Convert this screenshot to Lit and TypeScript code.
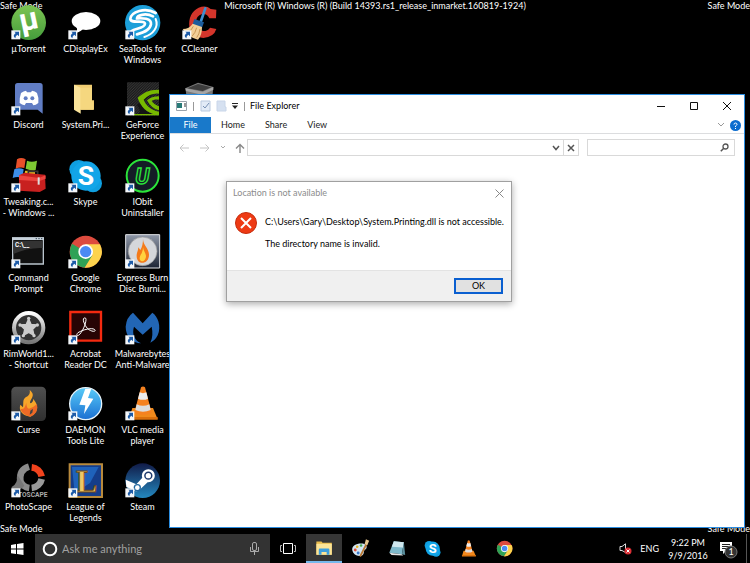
import { LitElement, html, css, svg, TemplateResult, SVGTemplateResult } from "lit";
import { customElement, property } from "lit/decorators.js";

type Art = SVGTemplateResult;

const skype: Art = svg`
  <circle cx="32" cy="34" r="28" fill="#0f9fe0"/><circle cx="75" cy="76" r="27" fill="#0f9fe0"/>
  <circle cx="54" cy="54" r="44" fill="#12a5e8"/>
  <text x="54" y="82" text-anchor="middle" font-size="80" font-weight="bold" fill="#fff">S</text>`;

const chrome: Art = svg`
  <circle cx="53" cy="53" r="48" fill="#dd4b3e"/>
  <path d="M53 53 L12 29 A48 48 0 0 0 50 101 L74 65Z" fill="#2fa256"/>
  <path d="M53 31 H96 A48 48 0 0 1 50 101 L73 64Z" fill="#fdd34d"/>
  <circle cx="53" cy="53" r="22" fill="#fff"/><circle cx="53" cy="53" r="17" fill="#4a8af4"/>`;

const vlc: Art = svg`
  <path d="M22 66 H84 L98 100 H12Z" fill="#f08a1c"/><path d="M12 93 H98 V101 H12Z" fill="#d96f0c"/>
  <path d="M48 4 Q54 -1 60 4 L80 80 Q54 94 28 80Z" fill="#f58220"/>
  <path d="M44 19 Q54 24 64 19 L69 38 Q54 45 39 38Z" fill="#eee"/>
  <path d="M35 55 Q54 64 73 55 L77 72 Q54 83 31 72Z" fill="#ddd"/>`;

const art: Record<string, Art> = {
  utorrent: svg`<defs><linearGradient id="g" x2="0" y2="1"><stop stop-color="#7cc452"/><stop offset="1" stop-color="#459c3c"/></linearGradient></defs>
    <circle cx="53" cy="53" r="52" fill="url(#g)"/>
    <text x="55" y="74" text-anchor="middle" font-size="94" font-weight="bold" fill="#fff" transform="rotate(-12 54 53)">µ</text>`,
  comic: svg`<ellipse cx="54" cy="48" rx="43" ry="27" fill="#fff"/><path d="M22 60 Q32 74 24 84 Q42 78 48 68Z" fill="#fff"/>`,
  seatools: svg`<circle cx="53" cy="53" r="53" fill="#1c9fd9"/>
    <g fill="none" stroke="#fff" stroke-linecap="round">
    <path d="M92 24 C60 6 18 20 16 42 C18 58 58 42 60 56 C60 70 30 70 20 78" stroke-width="8"/>
    <path d="M84 34 C60 22 36 32 36 40 C44 40 80 36 78 58 C74 78 52 84 36 88" stroke-width="8"/>
    <path d="M92 42 C102 66 84 88 58 96" stroke-width="6"/></g>`,
  ccleaner: svg`<path d="M103 14 L102 40 H82 Q76 25 60 27 Q42 32 42 52 Q44 76 64 78 Q78 78 84 68 L103 72 Q96 96 64 99 Q30 98 22 66 Q18 24 50 8 Q72 0 86 12Z" fill="#d4352b"/>
    <path d="M70 10 L57 48" stroke="#3f8fd0" stroke-width="8" stroke-linecap="round"/>
    <path d="M37 42 L66 52 L60 68 L32 58Z" fill="#1c5c9c"/>
    <path d="M32 56 L60 66 Q60 92 48 104 Q20 98 2 72 Q22 72 32 56Z" fill="#f2cf97"/>
    <path d="M34 64 Q28 78 16 82 M44 68 Q40 84 30 94 M54 72 Q52 88 44 98" stroke="#c99654" stroke-width="3" fill="none"/>`,
  discord: svg`<path d="M20 6 H87 Q95 6 95 14 V98 L80 86 H20 Q12 86 12 78 V14 Q12 6 20 6Z" fill="#617dc4"/>
    <path d="M30 36 Q38 30 45 29 L48 34 H60 L63 29 Q72 30 78 36 Q84 50 82 66 Q74 73 67 73 L63 66 H45 L41 73 Q33 72 26 66 Q25 50 30 36Z" fill="#fff"/>
    <circle cx="44" cy="52" r="6" fill="#617dc4"/><circle cx="64" cy="52" r="6" fill="#617dc4"/>`,
  folder: svg`<path d="M18 11 H72 V58 H78 V86 H34Z" fill="#f0cd72"/><path d="M18 11 L38 20 V98 L18 86Z" fill="#fbe49b"/>
    <path d="M38 20 H72 V60 L76 66 V86 H38Z" fill="#f5d77f"/>`,
  geforce: svg`<defs><pattern id="c" width="8" height="8" patternUnits="userSpaceOnUse"><path d="M0 8L8 0" stroke="#4a4a4a" stroke-width="2"/></pattern></defs>
    <path d="M6 4H102V104H6Z" fill="#1b1b1b"/><path d="M6 4H102V104H6Z" fill="url(#c)"/>
    <path d="M102 26 C74 25 56 36 40 54 C48 80 66 96 92 102 H30 C46 98 50 90 36 72 Z" fill="#141414"/>
    <path d="M102 26 C74 25 56 34 38 50 C46 76 66 96 94 101 L102 101 V92 C78 88 62 72 56 56 C70 42 84 36 102 38Z" fill="#77b900"/>
    <path d="M102 46 C86 46 76 50 66 58 C74 74 86 84 102 88 V76 C92 72 84 66 80 60 C86 56 94 55 102 56Z" fill="#77b900"/>
    <path d="M24 101 H102" stroke="#77b900" stroke-width="4"/>`,
  bin: svg`<path d="M10 22 L48 5 L94 18 L86 100 H22Z" fill="#777"/><path d="M16 22 L48 9 L88 19 L62 30Z" fill="#3d3d3d"/>
    <path d="M10 22 L62 32 L94 18 V26 L62 42 L12 30Z" fill="#a5a5a5"/>`,
  tweaking: svg`<path d="M18 4 Q30 -4 44 4 L40 30 Q28 26 14 32Z" fill="#e8502a"/><path d="M48 8 Q62 14 78 8 L74 36 Q60 38 44 32Z" fill="#7dc832"/>
    <path d="M10 34 Q24 28 38 34 L34 60 Q20 54 5 60Z" fill="#3d8ee8"/><path d="M42 38 H72 V56 H40Z" fill="#e5b822"/>
    <path d="M52 48 V40 H80 V48" fill="none" stroke="#333" stroke-width="5"/>
    <path d="M24 52 L40 44 L102 50 L104 92 L86 102 L24 98Z" fill="#c8201f"/><path d="M24 52 L84 60 L104 52 V62 L84 70 L24 66Z" fill="#ec4540"/>
    <path d="M80 58 h6 v22 h-6z" fill="#ddd"/>`,
  skype,
  iobit: svg`<circle cx="53" cy="53" r="48" fill="#141c26" stroke="#2be53a" stroke-width="6"/>
    <text x="52" y="77" text-anchor="middle" font-size="66" font-style="italic" font-weight="bold" fill="#141c26" stroke="#2be53a" stroke-width="4">U</text>`,
  cmd: svg`<path d="M5 12 H97 V90 H5Z" fill="#111" stroke="#b9c3cc" stroke-width="4"/><path d="M7 20 H95 V42 Q50 40 7 60Z" fill="#333"/>
    <path d="M3 10 H99 V18 H3Z" fill="#c6d1da"/><path d="M74 14h4M82 14h4M90 14h4" stroke="#345" stroke-width="3"/>
    <text x="12" y="39" font-size="19" font-weight="bold" fill="#fff">C:\\__</text>`,
  chrome,
  burn: svg`<defs><linearGradient id="b" x2="0" y2="1"><stop stop-color="#8f98a8"/><stop offset="1" stop-color="#1d2434"/></linearGradient></defs>
    <path d="M2 2H104V102H2Z" fill="url(#b)" stroke="#e4e6ea" stroke-width="3"/><circle cx="53" cy="52" r="43" fill="#d5d7db" stroke="#999" stroke-width="2"/>
    <path d="M54 14 C54 34 72 42 72 62 C72 78 62 86 52 86 C40 86 34 76 35 62 C36 54 40 48 40 40 L46 48 C52 38 54 26 54 14Z" fill="#f47a1a"/>
    <path d="M54 40 C56 54 66 60 62 72 Q58 83 50 82 C40 78 44 66 50 58 Q54 50 54 40Z" fill="#ffd23e"/>`,
  rimworld: svg`<defs><linearGradient id="r" x2="0" y2="1"><stop stop-color="#fff"/><stop offset="1" stop-color="#777"/></linearGradient></defs>
    <circle cx="53" cy="53" r="44" fill="#333" stroke="url(#r)" stroke-width="12"/>
    <path d="M53 26 L60 43 L78 45 L65 58 L69 76 L53 67 L37 76 L41 58 L28 45 L46 43Z" fill="#ccc" stroke="#ccc" stroke-width="4" stroke-linejoin="round"/>
    <g fill="#ccc"><circle cx="53" cy="25" r="5"/><circle cx="79" cy="45" r="5"/><circle cx="27" cy="45" r="5"/><circle cx="69" cy="77" r="5"/><circle cx="37" cy="77" r="5"/></g>`,
  acrobat: svg`<path d="M7 6H99V92H7Z" fill="#270404" stroke="#f42a10" stroke-width="7"/>
    <path d="M51 24 C45 22 44 32 50 42 C56 56 64 62 76 64 C86 64 82 56 70 56 C56 56 40 62 30 68 C22 76 30 80 36 72 C44 62 54 42 54 28 Q54 24 51 24Z" fill="none" stroke="#fff" stroke-width="3"/>`,
  malware: svg`<path d="M24 8 L53 40 L82 8 C98 18 110 48 98 76 Q90 92 76 98 Q86 78 80 50 L53 74 L27 50 C20 72 28 90 48 100 C22 98 2 80 2 50 Q4 22 24 8Z" fill="#2266b5"/>`,
  curse: svg`<defs><linearGradient id="cu" x2="0" y2="1"><stop stop-color="#505050"/><stop offset="1" stop-color="#303030"/></linearGradient></defs>
    <rect x="1" y="2" width="104" height="103" rx="14" fill="url(#cu)"/>
    <path d="M56 12 C78 30 54 40 58 52 C64 50 68 44 66 38 C82 56 86 76 58 92 C34 88 22 74 28 56 L36 64 C38 50 34 42 44 34 Q60 28 56 12Z" fill="#f7a62a"/>
    <path d="M46 50 Q46 66 54 68 Q68 64 78 54 Q84 82 58 92 Q34 86 28 68 Q40 74 46 50Z" fill="#ee6a26"/>
    <path d="M58 74 l8 -6 l-2 12 l-8 6z" fill="#444"/>`,
  daemon: svg`<defs><linearGradient id="d" x2="0" y2="1"><stop stop-color="#58cbf8"/><stop offset="1" stop-color="#1a6fd2"/></linearGradient></defs>
    <circle cx="53" cy="53" r="48" fill="url(#d)" stroke="#e8f4fb" stroke-width="4"/>
    <path d="M52 8 L70 8 L60 36 L76 38 L48 84 L52 58 L34 56Z" fill="#fff"/>`,
  vlc,
  photoscape: svg`<g fill="none" stroke-width="20"><path d="M62 13 A34 34 0 0 1 92 40" stroke="#f1431d"/>
    <path d="M92 48 A34 34 0 0 1 62 75" stroke="#999"/><path d="M55 75 A34 34 0 0 1 28 54 Q24 20 54 11" stroke="#8b8b8b"/></g>
    <path d="M18 34 Q22 62 2 72 V82 Q28 84 40 68Z" fill="#777"/>
    <text x="21" y="102" font-size="20" font-weight="bold" fill="#aaa">TOSCAPE</text>`,
  league: svg`<path d="M5 4H102V102H5Z" fill="#153d8a" stroke="#b88a3c" stroke-width="6"/><path d="M12 12 L92 12 L66 60 L20 90Z" fill="#1f62ba"/>
    <text x="56" y="86" text-anchor="middle" font-size="96" class="serif" font-weight="bold" fill="#efc765" stroke="#6d4717" stroke-width="3">L</text>`,
  steam: svg`<defs><linearGradient id="s" x2="0" y2="1"><stop stop-color="#111b48"/><stop offset="1" stop-color="#2488bf"/></linearGradient></defs>
    <circle cx="53" cy="53" r="52" fill="url(#s)"/><path d="M2 50 L34 64 L52 44 L72 54 L44 80 Q34 90 24 80 L4 72Z" fill="#fff"/>
    <circle cx="70" cy="38" r="16" fill="#1d3a6d" stroke="#fff" stroke-width="7"/><circle cx="70" cy="38" r="8" fill="#fff"/>
    <circle cx="37" cy="74" r="9" fill="none" stroke="#2469a0" stroke-width="4"/>`,
  explorer: svg`<path d="M8 14 H38 L44 22 H98 V92 H8Z" fill="#e9bc4c"/><path d="M8 28 H98 V92 H8Z" fill="#fce497"/>
    <path d="M22 92 V62 Q22 56 28 56 H78 Q84 56 84 62 V92 H68 V76 H38 V92Z" fill="#3f9fdc"/>`,
  paint: svg`<path d="M2 64 C-6 30 44 14 76 24 C98 36 92 52 80 60 C68 68 80 84 62 96 C36 106 8 92 2 64Z" fill="#d3e6f4"/>
    <circle cx="20" cy="62" r="9" fill="#e0503c"/><circle cx="32" cy="42" r="8" fill="#e6b324"/><circle cx="56" cy="34" r="8" fill="#48a850"/><circle cx="38" cy="80" r="9" fill="#3a78c9"/>
    <path d="M50 102 L92 20" stroke="#b97834" stroke-width="11"/><path d="M78 24 L86 -4 L106 4 L94 32Z" fill="#e7c890"/>`,
  notes: svg`<path d="M36 8 L98 14 L86 88 L8 78Z" fill="#7fb9cb"/><path d="M36 8 L98 14 L93 46 L24 42Z" fill="#cfe7ee"/>
    <path d="M8 78 L86 88 L94 96 L22 92Z" fill="#e4e4e4"/><path d="M98 14 L106 92 L86 88Z" fill="#5c8f9d"/>`,
};

@customElement("art-icon")
class ArtIcon extends LitElement {
  static styles = css`
    :host { display: block; position: relative; width: 35px; height: 35px; }
    svg { display: block; width: 100%; height: 100%; overflow: visible; font-family: Roboto, sans-serif; }
    .serif { font-family: "Liberation Serif", serif; }
    .link { position: absolute; left: 0; bottom: 0; width: 10px; height: 10px; }
  `;
  @property() name = "";
  @property({ type: Boolean }) shortcut = false;
  render() {
    return html`<svg viewBox="0 0 105 105" aria-hidden="true">${art[this.name]}</svg>
      ${this.shortcut
        ? html`<svg class="link" viewBox="0 0 30 30" aria-hidden="true"><path d="M1 1H28V28H1Z" fill="#f4f7fa"/>
            <path d="M10 5 H24 V19 L19 14 Q13 18 13 25 Q3 18 14 9Z" fill="#1d5ba8"/></svg>`
        : ""}`;
  }
}

interface Shortcut { icon: string; lines: string[]; plain?: boolean }

const columns: Shortcut[][] = [
  [
    { icon: "utorrent", lines: ["µTorrent"] },
    { icon: "discord", lines: ["Discord"] },
    { icon: "tweaking", lines: ["Tweaking.c...", "- Windows ..."] },
    { icon: "cmd", lines: ["Command", "Prompt"] },
    { icon: "rimworld", lines: ["RimWorld1...", "- Shortcut"] },
    { icon: "curse", lines: ["Curse"] },
    { icon: "photoscape", lines: ["PhotoScape"] },
  ],
  [
    { icon: "comic", lines: ["CDisplayEx"] },
    { icon: "folder", lines: ["System.Pri..."], plain: true },
    { icon: "skype", lines: ["Skype"] },
    { icon: "chrome", lines: ["Google", "Chrome"] },
    { icon: "acrobat", lines: ["Acrobat", "Reader DC"] },
    { icon: "daemon", lines: ["DAEMON", "Tools Lite"] },
    { icon: "league", lines: ["League of", "Legends"] },
  ],
  [
    { icon: "seatools", lines: ["SeaTools for", "Windows"] },
    { icon: "geforce", lines: ["GeForce", "Experience"] },
    { icon: "iobit", lines: ["IObit", "Uninstaller"] },
    { icon: "burn", lines: ["Express Burn", "Disc Burni..."] },
    { icon: "malware", lines: ["Malwarebytes", "Anti-Malware"] },
    { icon: "vlc", lines: ["VLC media", "player"] },
    { icon: "steam", lines: ["Steam"] },
  ],
  [
    { icon: "ccleaner", lines: ["CCleaner"] },
    { icon: "bin", lines: [], plain: true },
  ],
];

const glyph = (w: number, h: number, body: SVGTemplateResult): TemplateResult =>
  html`<svg class="glyph" width=${w} height=${h} viewBox="0 0 ${w} ${h}" aria-hidden="true">${body}</svg>`;

@customElement("explorer-window")
class ExplorerWindow extends LitElement {
  static styles = css`
    :host { display: flex; flex-direction: column; box-sizing: border-box; background: #fff; border: 1px solid #2b8de0; color: #222; font: 9px/12px Lato, sans-serif; }
    * { box-sizing: border-box; }
    button { font: inherit; color: inherit; border: 0; padding: 0; background: none; display: flex; align-items: center; justify-content: center; }
    .glyph { display: block; flex: none; }
    .title { display: flex; align-items: center; height: 22px; padding: 0 1px 0 6px; }
    .quick { display: flex; align-items: center; gap: 5px; }
    .quick i { width: 1px; height: 9px; margin: 0 1px; background: #999; }
    .name { margin-left: 4px; flex: 1; color: #000; }
    .control { width: 33px; height: 20px; }
    .tabs { display: flex; height: 17px; border-bottom: 1px solid #dcdddf; }
    .tab { padding: 0 10px; height: 16px; }
    .file { background: #1979ca; color: #fff; padding: 0; width: 41px; }
    .help { margin-left: auto; display: flex; align-items: center; gap: 5px; padding-right: 3px; }
    .nav { display: flex; align-items: center; padding: 5px 9px 0 8px; }
    .arrows { display: flex; flex: none; align-items: center; gap: 9px; width: 69px; }
    .box { display: flex; height: 17px; border: 1px solid #d9d9d9; }
    .address { flex: 1; margin-right: 8px; }
    .search { flex: 0 1 148px; }
    input { flex: 1; min-width: 0; border: 0; padding: 0 4px; background: none; font: inherit; outline: 0; }
    .box button { width: 15px; }
    .stop { border-left: 1px solid #d9d9d9; }
    .search button { width: 19px; }
  `;
  render() {
    return html`
      <header class="title">
        <div class="quick">
          ${glyph(11, 10, svg`<path d="M.5 .5H10.5V9.5H.5Z" fill="#fff" stroke="#9aa3ac"/><path d="M1 2H6V7H1Z" fill="#297b78"/><path d="M8 3h2M8 5h2" stroke="#333"/>`)}
          <i></i>
          ${glyph(11, 12, svg`<path d="M1 1H10V11H1Z" fill="#e2ebf7" stroke="#b9c9df"/><path d="M3 6L5 8L9 3" fill="none" stroke="#7891b5"/>`)}
          ${glyph(11, 12, svg`<path d="M1 1H9V7H10V11H1Z" fill="#d6e1f1" stroke="#c9d6e9"/>`)}
          ${glyph(6, 6, svg`<path d="M0 .5H6" stroke="#222"/><path d="M0 2.5H6L3 6Z" fill="#222"/>`)}
          <i></i>
        </div>
        <span class="name">File Explorer</span>
        <button class="control" aria-label="Minimize">${glyph(8, 8, svg`<path d="M0 4.5H8" stroke="#111"/>`)}</button>
        <button class="control" aria-label="Maximize">${glyph(8, 8, svg`<path d="M.5 .5H7.5V7.5H.5Z" fill="none" stroke="#111"/>`)}</button>
        <button class="control" aria-label="Close">${glyph(8, 8, svg`<path d="M0 0L8 8M8 0L0 8" stroke="#111"/>`)}</button>
      </header>
      <nav class="tabs">
        <button class="tab file">File</button>
        <button class="tab">Home</button><button class="tab">Share</button><button class="tab">View</button>
        <div class="help">
          <button aria-label="Expand ribbon">${glyph(8, 6, svg`<path d="M1 1L4 4L7 1" fill="none" stroke="#999"/>`)}</button>
          <button aria-label="Help">${glyph(11, 11, svg`<circle cx="5.5" cy="5.5" r="5.5" fill="#0b6ccf"/><path d="M4 4.5Q4 3 5.5 3T7 4.5Q7 5 5.5 6V7M5.5 8V9" stroke="#fff" fill="none"/>`)}</button>
        </div>
      </nav>
      <div class="nav">
        <div class="arrows">
          <button aria-label="Back">${glyph(12, 10, svg`<path d="M11 5H2M5.5 1.5L2 5L5.5 8.5" fill="none" stroke="#c4c4c4"/>`)}</button>
          <button aria-label="Forward">${glyph(12, 10, svg`<path d="M1 5H10M6.5 1.5L10 5L6.5 8.5" fill="none" stroke="#c4c4c4"/>`)}</button>
          <button aria-label="Recent">${glyph(6, 5, svg`<path d="M1 1L3 3L5 1" fill="none" stroke="#aaa"/>`)}</button>
          <button aria-label="Up">${glyph(10, 10, svg`<path d="M5 10V2M1 5.5L5 1.5L9 5.5" fill="none" stroke="#888" stroke-width="1.4"/>`)}</button>
        </div>
        <div class="box address">
          <input aria-label="Address" />
          <button aria-label="History">${glyph(8, 6, svg`<path d="M1 1L4 4.5L7 1" fill="none" stroke="#555" stroke-width="1.5"/>`)}</button>
          <button class="stop" aria-label="Stop">${glyph(8, 8, svg`<path d="M1 1L7 7M7 1L1 7" stroke="#555" stroke-width="1.5"/>`)}</button>
        </div>
        <div class="box search">
          <input aria-label="Search" />
          <button aria-label="Find">${glyph(9, 9, svg`<circle cx="5.5" cy="3.5" r="2.5" fill="none" stroke="#555" stroke-width="1.3"/><path d="M3.8 5.3L.8 8.2" stroke="#555" stroke-width="1.5"/>`)}</button>
        </div>
      </div>`;
  }
}

@customElement("error-dialog")
class ErrorDialog extends LitElement {
  static styles = css`
    :host { display: block; box-sizing: border-box; background: #fff; border: 1px solid #a0a0a0; box-shadow: 0 2px 7px #0005; color: #000; font: 9px/12px Lato, sans-serif; }
    * { box-sizing: border-box; }
    header { display: flex; align-items: center; justify-content: space-between; height: 22px; padding: 0 7px 0 6px; color: #8c8c8c; }
    header button { border: 0; padding: 0; background: none; display: flex; }
    .body { display: flex; gap: 8px; padding: 8px; height: 66px; }
    .alert { flex: none; }
    .text { display: flex; flex-direction: column; gap: 10px; padding-top: 4px; white-space: nowrap; }
    p { margin: 0; }
    footer { display: flex; justify-content: flex-end; padding: 7px 8px; background: #f0f0f0; border-top: 1px solid #e3e3e3; }
    .ok { width: 49px; height: 16px; padding: 0; border: 2px solid #0a5fd0; background: #e1e1e1; color: #000; font: inherit; }
  `;
  render() {
    return html`<header><span>Location is not available</span>
        <button aria-label="Close">${glyph(9, 9, svg`<path d="M.5 .5L8.5 8.5M8.5 .5L.5 8.5" stroke="#888"/>`)}</button></header>
      <div class="body">
        <svg class="alert" width="22" height="22" viewBox="0 0 22 22" aria-hidden="true"><circle cx="11" cy="11" r="10.5" fill="#ee3a14" stroke="#c52d0e"/><path d="M6 6L16 16M16 6L6 16" stroke="#fff" stroke-width="2"/></svg>
        <div class="text"><p>C:\\Users\\Gary\\Desktop\\System.Printing.dll is not accessible.</p><p>The directory name is invalid.</p></div>
      </div>
      <footer><button class="ok">OK</button></footer>`;
  }
}

@customElement("task-bar")
class TaskBar extends LitElement {
  static styles = css`
    :host { display: flex; align-items: stretch; height: 29px; background: #000; color: #fff; font: 9px/13px Lato, sans-serif; }
    * { box-sizing: border-box; }
    button { border: 0; padding: 0; background: none; color: inherit; font: inherit; display: flex; align-items: center; justify-content: center; }
    .start { width: 35px; }
    .search { display: flex; align-items: center; gap: 4px; width: 235px; padding: 0 11px 0 7px; background: #333; }
    input { flex: 1; min-width: 0; border: 0; padding: 0; outline: 0; background: none; color: #fff; font: 11px/16px Lato, sans-serif; }
    input::placeholder { color: #a0a0a0; opacity: 1; }
    .view { width: 36px; }
    .app { width: 36px; }
    .app art-icon { width: 17px; height: 17px; }
    .open { background: #363636; border-bottom: 2px solid #76b9ed; }
    .open art-icon { width: 18px; height: 18px; }
    .tray { display: flex; align-items: center; gap: 8px; margin-left: auto; }
    .clock { width: 42px; text-align: center; white-space: nowrap; }
    .edge { align-self: stretch; width: 4px; border-left: 1px solid #555; }
    .note { width: 21px; }
    .count { font-size: 9px; fill: #fff; }
  `;
  render() {
    return html`
      <button class="start" aria-label="Start">${glyph(13, 12, svg`<path d="M0 2L5 1V5.5H0ZM6 1L12.5 0V5.5H6ZM0 6.5H5V11L0 10.3ZM6 6.5H12.5V12L6 11Z" fill="#fff"/>`)}</button>
      <label class="search">
        ${glyph(16, 16, svg`<circle cx="8" cy="8" r="6.3" fill="none" stroke="#fff" stroke-width="2"/>`)}
        <input placeholder="Ask me anything" aria-label="Ask me anything" />
        ${glyph(9, 13, svg`<rect x="2.5" y=".5" width="4" height="8" rx="1.5" fill="none" stroke="#aaa"/><path d="M.5 5V9.5H8.5V5M4.5 9.5V13" fill="none" stroke="#aaa"/>`)}
      </label>
      <button class="view" aria-label="Task view">${glyph(16, 11, svg`<path d="M3.5 .5H12.5V10.5H3.5Z" fill="none" stroke="#fff"/><path d="M2 2.5H.5V8.5H2M14 2.5H15.5V8.5H14" fill="none" stroke="#bbb"/>`)}</button>
      <button class="app open" aria-label="File Explorer"><art-icon name="explorer"></art-icon></button>
      ${["paint", "notes", "skype", "vlc", "chrome"].map(
        (n) => html`<button class="app" aria-label=${n}><art-icon name=${n}></art-icon></button>`
      )}
      <div class="tray">
        ${glyph(13, 12, svg`<path d="M1 3.5H3L6.5 .8V9.5L3 7.5H1Z" fill="none" stroke="#ddd"/><circle cx="9" cy="8" r="3.5" fill="#dc2f35"/><path d="M7.5 6.5L10.5 9.5M10.5 6.5L7.5 9.5" stroke="#fff"/>`)}
        <span>ENG</span>
        <div class="clock">9:22 PM<br />9/9/2016</div>
        <button class="note" aria-label="Notifications">${glyph(20, 20, svg`<path d="M2 3H14V12H8L5 15V12H2Z" fill="#fff"/><path d="M4 5.5H12M4 7.5H12M4 9.5H9" stroke="#222"/><circle cx="13" cy="13" r="6" fill="#333" stroke="#777"/><text class="count" x="13" y="16" text-anchor="middle">1</text>`)}</button>
        <div class="edge"></div>
      </div>`;
  }
}

@customElement("app-root")
class AppRoot extends LitElement {
  static styles = css`
    :host { display: flex; flex-direction: column; min-height: 100vh; background: #000; color: #fff; font: 9px/11px Lato, sans-serif; }
    * { box-sizing: border-box; }
    .desktop { flex: 1; position: relative; display: grid; overflow: hidden; }
    .mark { position: absolute; white-space: nowrap; }
    .top { top: 0; }
    .bottom { bottom: 0; }
    .left { left: 0; }
    .right { right: 0; }
    .center { left: 0; right: 0; text-align: center; }
    .icons { position: relative; display: grid; grid-template-rows: repeat(7, 1fr); grid-auto-columns: 57px; grid-auto-flow: column; }
    .cell { display: flex; flex-direction: column; align-items: center; gap: 3px; padding-top: 5px; color: #fff; text-decoration: none; text-align: center; white-space: nowrap; }
    explorer-window { position: absolute; left: 169px; right: 5px; top: 94px; bottom: 6px; }
    error-dialog { position: absolute; left: 226px; top: 181px; width: 286px; }
  `;
  render() {
    return html`
      <main class="desktop">
        <span class="mark top left">Safe Mode</span>
        <span class="mark top center">Microsoft (R) Windows (R) (Build 14393.rs1_release_inmarket.160819-1924)</span>
        <span class="mark top right">Safe Mode</span>
        <span class="mark bottom left">Safe Mode</span>
        <span class="mark bottom right">Safe Mode</span>
        <div class="icons">
          ${columns.map((col) =>
            Array.from({ length: 7 }, (_, i) => col[i]).map((s) =>
              s
                ? html`<a class="cell" href="#" aria-label=${s.lines.join(" ") || "Bin"}>
                    <art-icon name=${s.icon} ?shortcut=${!s.plain}></art-icon>
                    <span>${s.lines.map((l, i) => html`${i ? html`<br />` : ""}${l}`)}</span></a>`
                : html`<span></span>`
            )
          )}
        </div>
        <explorer-window></explorer-window>
        <error-dialog role="alertdialog" aria-label="Location is not available"></error-dialog>
      </main>
      <task-bar></task-bar>`;
  }
}
